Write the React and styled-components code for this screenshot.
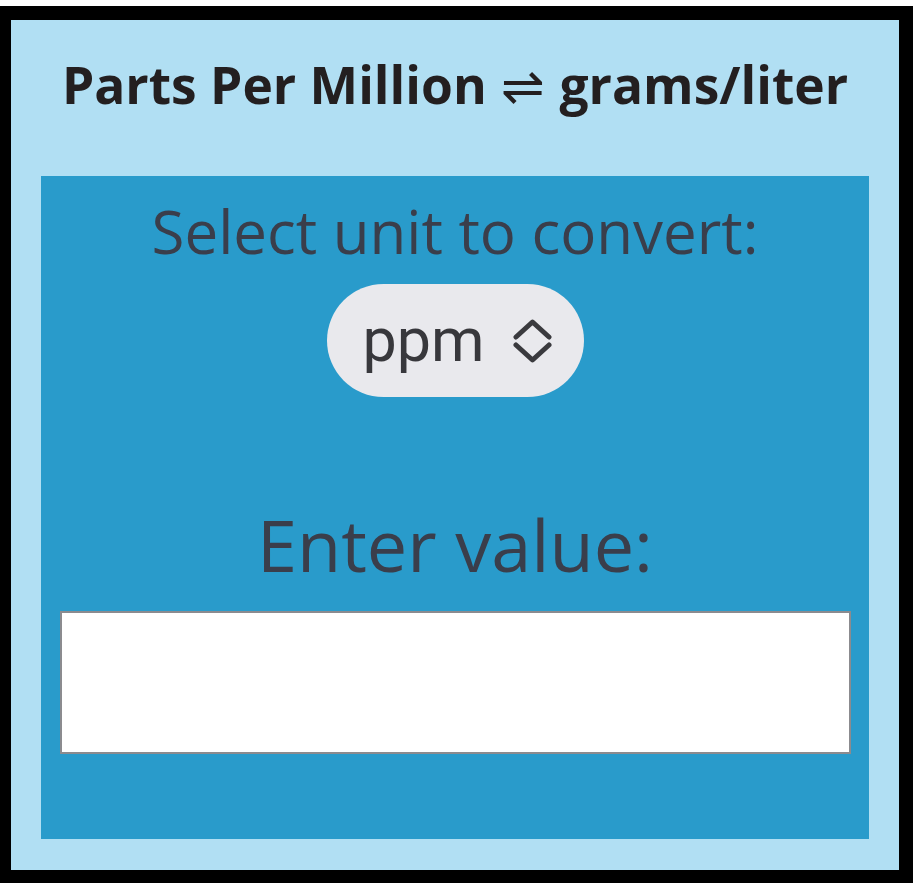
import React from "react";
import styled, { createGlobalStyle } from "styled-components";

const GlobalStyle = createGlobalStyle`
  html, body { margin: 0; padding: 0; background: #ffffff; }
  body { font-family: "Open Sans", "Liberation Sans", sans-serif; }
  * { box-sizing: border-box; }
`;

const Page = styled.div`
  padding-top: 6px;
`;

const Frame = styled.div`
  width: 913px;
  height: 877px;
  border-style: solid;
  border-color: #000000;
  border-width: 14px 14px 13px 11px;
  background: #b1dff3;
  padding: 30px 30px 31px 30px;
  display: flex;
  flex-direction: column;
`;

const Title = styled.h1`
  margin: 0 0 54px;
  font-family: "Open Sans", "Liberation Sans", sans-serif;
  font-weight: 700;
  font-size: 51.5px;
  line-height: 69.5px;
  color: #231f20;
  text-align: center;
  white-space: nowrap;
`;

const Arrow = styled.span`
  font-family: "DejaVu Sans", sans-serif;
  font-weight: 200;
  font-size: 52px;
  color: #231f20;
  margin: 0 1px;
`;

const Card = styled.div`
  flex: 1;
  background: #299bcb;
  padding: 14px 18px 84px;
  display: flex;
  flex-direction: column;
  align-items: center;
`;

const Label = styled.label`
  font-family: "Open Sans", "Liberation Sans", sans-serif;
  font-weight: 400;
  color: #3a3e4b;
  font-size: ${(p) => p.$size}px;
  line-height: ${(p) => p.$lh}px;
  margin-bottom: ${(p) => p.$mb}px;
  white-space: nowrap;
`;

const SelectWrap = styled.div`
  position: relative;
  width: 257px;
  height: 113px;
  margin-bottom: 98px;
`;

const Select = styled.select`
  appearance: none;
  -webkit-appearance: none;
  width: 100%;
  height: 100%;
  border: none;
  outline: none;
  border-radius: 57px;
  background: #e9e9ed;
  color: #38383c;
  font-family: Roboto, "Liberation Sans", sans-serif;
  font-size: 61px;
  padding: 0 0 0 36px;
  margin: 0;
`;

const Chevron = styled.svg`
  position: absolute;
  right: 32px;
  top: 35px;
  width: 39px;
  height: 44px;
  pointer-events: none;
`;

const Input = styled.input`
  width: 791px;
  height: 143px;
  border: 2px solid #8b8b8f;
  background: #ffffff;
  margin: 0;
  padding: 0 12px;
  font-family: "Open Sans", sans-serif;
  font-size: 48px;
  outline: none;
`;

export default function App() {
  return (
    <>
      <GlobalStyle />
      <Page>
        <Frame>
          <Title>
            Parts Per Million <Arrow>⇌</Arrow> grams/liter
          </Title>
          <Card>
            <Label $size={60} $lh={82} $mb={12} htmlFor="unit">
              Select unit to convert:
            </Label>
            <SelectWrap>
              <Select id="unit" defaultValue="ppm">
                <option value="ppm">ppm</option>
                <option value="gl">g/L</option>
              </Select>
              <Chevron viewBox="0 0 39 44" fill="none" stroke="#3a3a3e" strokeWidth="5" strokeLinecap="round" strokeLinejoin="round">
                <path d="M3 18 L19.5 3 L36 18" />
                <path d="M3 26 L19.5 41 L36 26" />
              </Chevron>
            </SelectWrap>
            <Label $size={72} $lh={98} $mb={18} htmlFor="value">
              Enter value:
            </Label>
            <Input id="value" type="text" />
          </Card>
        </Frame>
      </Page>
    </>
  );
}
